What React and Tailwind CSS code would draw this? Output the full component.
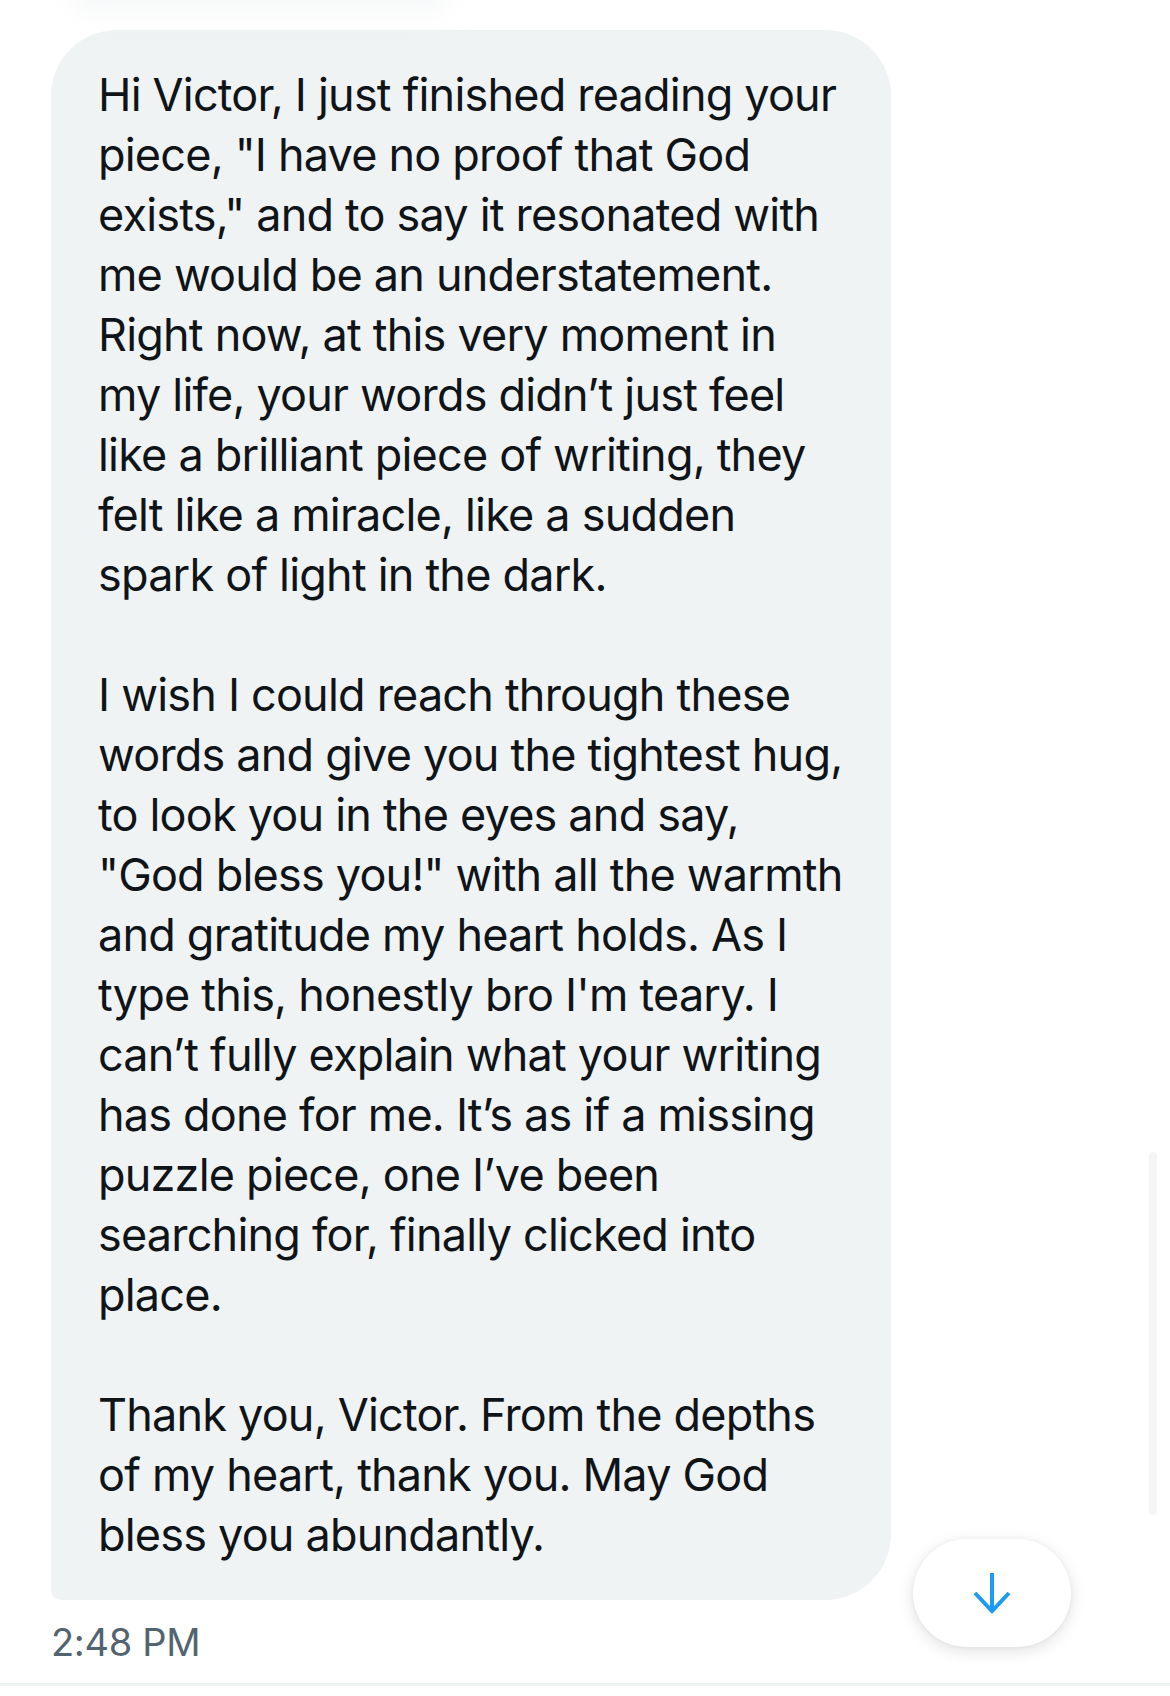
const paragraphs = [
    [
        'Hi Victor, I just finished reading your',
        'piece, "I have no proof that God',
        'exists," and to say it resonated with',
        'me would be an understatement.',
        'Right now, at this very moment in',
        'my life, your words didn\u2019t just feel',
        'like a brilliant piece of writing, they',
        'felt like a miracle, like a sudden',
        'spark of light in the dark.',
    ],
    [
        'I wish I could reach through these',
        'words and give you the tightest hug,',
        'to look you in the eyes and say,',
        '"God bless you!" with all the warmth',
        'and gratitude my heart holds. As I',
        'type this, honestly bro I\'m teary. I',
        'can\u2019t fully explain what your writing',
        'has done for me. It\u2019s as if a missing',
        'puzzle piece, one I\u2019ve been',
        'searching for, finally clicked into',
        'place.',
    ],
    [
        'Thank you, Victor. From the depths',
        'of my heart, thank you. May God',
        'bless you abundantly.',
    ],
];

export default function App() {
    return (
        <div className="relative w-[1170px] h-[1696px] bg-white overflow-hidden font-['Inter',sans-serif] flex flex-col">
            {/* faint edge of the previous message */}
            <div className="absolute left-[70px] -top-[20px] w-[380px] h-[32px] rounded-full bg-[#f7f8f9] blur-md"></div>

            <div className="flex items-end justify-between pt-[30px] pl-[51px] pr-[99px]">
                <div className="flex flex-col">
                    <div className="w-[840px] bg-[#eff3f4] rounded-[66px] rounded-bl-[10px] pl-[47px] pr-[20px] py-[35px] text-[#0f1419] text-[45px] leading-[60px] tracking-[-0.8px]">
                        {paragraphs.map((lines, i) => (
                            <div key={i} className={i > 0 ? 'mt-[60px]' : ''}>
                                {lines.map((line) => (
                                    <div key={line} className="whitespace-nowrap">{line}</div>
                                ))}
                            </div>
                        ))}
                    </div>
                    <div className="mt-[17px] text-[38px] leading-[50px] text-[#536471] tracking-[-0.3px]">2:48 PM</div>
                </div>

                {/* jump to latest button */}
                <button className="mb-[20px] w-[158px] h-[108px] rounded-full bg-white shadow-[0_4px_16px_rgba(0,0,0,0.12),0_0_4px_rgba(0,0,0,0.05)] flex items-center justify-center">
                    <svg width="40" height="44" viewBox="0 0 40 44" fill="none" stroke="#1d9bf0" strokeWidth="4" strokeLinecap="butt" strokeLinejoin="miter">
                        <path d="M20 2v38" />
                        <path d="M3 22l17 18 17-18" />
                    </svg>
                </button>
            </div>

            <div className="mt-[16px] h-[3px] bg-[#eff3f4]"></div>

            {/* scroll indicator */}
            <div className="absolute left-[1149px] top-[1152px] w-[8px] h-[363px] rounded-full bg-[#f5f5f5]"></div>
        </div>
    );
}
